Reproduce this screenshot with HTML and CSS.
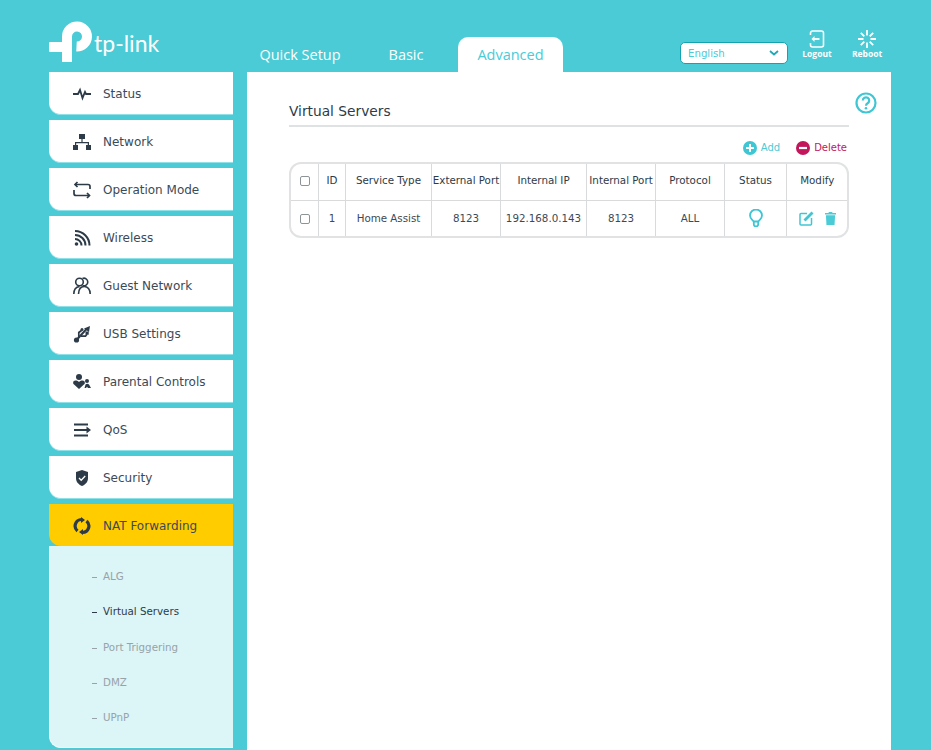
FILE: index.html
```html
<!DOCTYPE html>
<html lang="en">
<head>
<meta charset="utf-8">
<title>TP-Link Virtual Servers</title>
<link rel="stylesheet" href="styles.css">
</head>
<body>
<header class="topbar">
  <div class="logo">
    <svg class="logo-mark" width="44" height="44" viewBox="0 0 44 44"><path d="M18 41V15.500A10 10 0 1 1 27.500 25.500" fill="none" stroke="#fff" stroke-width="10"/><rect x="0" y="21" width="14" height="10" rx="1" fill="#fff"/></svg>
    <span class="logo-text">tp-link</span>
  </div>
  <nav class="tabs">
    <a class="tab tab-quick">Quick Setup</a>
    <a class="tab tab-basic">Basic</a>
    <a class="tab tab-active">Advanced</a>
  </nav>
  <div class="top-tools">
    <div class="lang"><span>English</span>
      <svg width="10" height="6" viewBox="0 0 10 6"><path d="M1 1l4 3.500L9 1" fill="none" stroke="#1fa8b5" stroke-width="1.800"/></svg>
    </div>
    <a class="tool">
      <svg width="18" height="18" viewBox="0 0 18 18" fill="none" stroke="#fff" stroke-width="1.600"><path d="M2.500 5V3a2 2 0 0 1 2-2h9a2 2 0 0 1 2 2v12a2 2 0 0 1-2 2h-9a2 2 0 0 1-2-2v-2"/><path d="M6.500 6L3.500 9l3 3z" fill="#fff" stroke="none"/><path d="M6 9h5.500" stroke-width="1.800"/></svg>
      <span>Logout</span>
    </a>
    <a class="tool">
      <svg width="18" height="18" viewBox="0 0 18 18" fill="none" stroke="#fff" stroke-width="1.800"><path d="M9 0v5.500M9 12.500V18M0 9h5.500M12.500 9H18M2.800 2.800l3.500 3.500M11.700 11.700l3.500 3.500M15.200 2.800l-3.500 3.500M6.300 11.700l-3.500 3.500"/></svg>
      <span>Reboot</span>
    </a>
  </div>
</header>
<div class="layout">
  <aside class="sidebar">
    <a class="nav-item"><svg class="nav-icon" viewBox="0 0 18 18" fill="none" stroke="#2d3b48" stroke-width="1.800"><path d="M0 9h5l2-4 2.500 8L12 7l1 2h5"/></svg><span>Status</span></a>
    <a class="nav-item"><svg class="nav-icon" viewBox="0 0 18 18" fill="#2d3b48"><rect x="6" y="1" width="6" height="5"/><rect x="0" y="12" width="5" height="5"/><rect x="13" y="12" width="5" height="5"/><path d="M8.400 6h1.200v3H16v3h-1.200v-1.800H3.200V12H2V9h6.400z"/></svg><span>Network</span></a>
    <a class="nav-item"><svg class="nav-icon" viewBox="0 0 18 18" fill="none" stroke="#2d3b48" stroke-width="1.700"><path d="M4.500 1L2 3.500 4.500 6"/><path d="M2.500 3.500h12.500a2 2 0 0 1 2 2V8"/><path d="M14 17l2.500-2.500L14 12"/><path d="M16 14.500H3a2 2 0 0 1-2-2V9"/></svg><span>Operation Mode</span></a>
    <a class="nav-item"><svg class="nav-icon" viewBox="0 0 18 18" fill="none" stroke="#2d3b48" stroke-width="2"><path d="M2 2a14.500 14.500 0 0 1 14.500 14.500M2 6a10.500 10.500 0 0 1 10.500 10.500M2 10a6.500 6.500 0 0 1 6.500 6.500"/><circle cx="3.500" cy="15" r="1.800" fill="#2d3b48" stroke="none"/></svg><span>Wireless</span></a>
    <a class="nav-item"><svg class="nav-icon" viewBox="0 0 18 18" fill="none" stroke="#2d3b48" stroke-width="1.600"><circle cx="6.500" cy="5" r="3.800"/><path d="M9.500 1.500a3.800 3.800 0 1 1 0 7"/><path d="M0.800 17c0-4 2.300-7 5.700-7.500M17.200 17c0-4.500-2.500-7.500-6-7.500-3 0-5.500 2.500-5.700 7.500"/></svg><span>Guest Network</span></a>
    <a class="nav-item"><svg class="nav-icon" viewBox="0 0 18 18"><g fill="none" stroke="#2d3b48"><path d="M3.500 15L13.500 4" stroke-width="2"/><path d="M5.800 12.500V7.500L8.500 5.500" stroke-width="1.700"/><path d="M8 11.200h4.500l1.500-2" stroke-width="1.700"/></g><g fill="#2d3b48"><circle cx="3.500" cy="15" r="2.600"/><path d="M11 3.500L17 1l-1 6z"/><circle cx="9" cy="4.500" r="1.500"/><rect x="12.500" y="6.500" width="3.200" height="3.200"/></g></svg><span>USB Settings</span></a>
    <a class="nav-item"><svg class="nav-icon" viewBox="0 0 18 18" fill="#2d3b48"><circle cx="6" cy="4" r="3"/><path d="M6 16L.5 11C-1 8 2.500 6 6 9c3.500-3 7-1 5.500 2z"/><circle cx="14" cy="8" r="2"/><path d="M11.500 15l1-3.500c1-1 2.500-1 3.500 0l2 3.500h-3l-1-1.200-1 1.200z"/></svg><span>Parental Controls</span></a>
    <a class="nav-item"><svg class="nav-icon" viewBox="0 0 18 18" fill="#2d3b48"><rect x="1" y="2.500" width="14" height="2"/><rect x="1" y="8" width="14" height="2"/><rect x="1" y="13.500" width="14" height="2"/><path d="M13.500 5.500l4.500 3.500-4.500 3.500z"/></svg><span>QoS</span></a>
    <a class="nav-item"><svg class="nav-icon" viewBox="0 0 18 18"><path d="M9 1l6 2v6c0 4-2.500 6.500-6 8-3.500-1.500-6-4-6-8V3z" fill="#2d3b48"/><path d="M6 9l2.200 2.200L12.200 7" fill="none" stroke="#fff" stroke-width="1.300"/></svg><span>Security</span></a>
    <div class="nav-group">
      <a class="nav-item nav-item-active"><svg class="nav-icon" viewBox="0 0 18 18" fill="none" stroke="#2d3b48" stroke-width="3.200"><path d="M4.500 14A6.500 6.500 0 0 1 8.500 2.500"/><path d="M13.500 4A6.500 6.500 0 0 1 9.500 15.500"/><path d="M8 0v6l4-3zM10 18v-6l-4 3z" fill="#2d3b48" stroke="none"/></svg><span>NAT Forwarding</span></a>
      <ul class="subnav">
        <li class="sub-item">ALG</li>
        <li class="sub-item sub-item-active">Virtual Servers</li>
        <li class="sub-item">Port Triggering</li>
        <li class="sub-item">DMZ</li>
        <li class="sub-item">UPnP</li>
      </ul>
    </div>
  </aside>
  <main class="panel">
    <div class="panel-head">
      <h1 class="title">Virtual Servers</h1>
      <svg class="help" width="22" height="22" viewBox="0 0 22 22" fill="none" stroke="#3fc6d4" stroke-width="2.200"><circle cx="11" cy="11" r="9.500"/><path d="M7.800 8.500a3.200 3.200 0 1 1 4.800 2.800c-1 .6-1.600 1.200-1.600 2.400"/><circle cx="11" cy="16.300" r="1.300" fill="#3fc6d4" stroke="none"/></svg>
    </div>
    <div class="actions">
      <a class="action action-add"><svg width="14" height="14" viewBox="0 0 14 14"><circle cx="7" cy="7" r="7" fill="#3fc6d4"/><path d="M7 3v8M3 7h8" stroke="#fff" stroke-width="2"/></svg>Add</a>
      <a class="action action-del"><svg width="14" height="14" viewBox="0 0 14 14"><circle cx="7" cy="7" r="7" fill="#c2185b"/><path d="M3 7h8" stroke="#fff" stroke-width="2.200"/></svg>Delete</a>
    </div>
    <div class="table-wrap">
      <table class="grid">
        <colgroup>
          <col class="c-check"><col class="c-id"><col class="c-type"><col class="c-port"><col class="c-ip"><col class="c-port2"><col class="c-proto"><col class="c-status"><col>
        </colgroup>
        <thead>
          <tr>
            <th><span class="check"></span></th><th>ID</th><th>Service Type</th><th>External Port</th><th>Internal IP</th><th>Internal Port</th><th>Protocol</th><th>Status</th><th>Modify</th>
          </tr>
        </thead>
        <tbody>
          <tr>
            <td><span class="check"></span></td><td>1</td><td>Home Assist</td><td>8123</td><td>192.168.0.143</td><td>8123</td><td>ALL</td>
            <td><svg class="cell-icon" width="14" height="18" viewBox="0 0 14 18" fill="none" stroke="#3fc6d4" stroke-width="1.800"><path d="M4.700 12.500C3 10.500 1 9.500 1 6.500a6 6 0 0 1 12 0c0 3-2 4-3.700 6z"/><path d="M4.800 12.500v2.700a1.800 1.800 0 0 0 4.400 0v-2.700"/></svg></td>
            <td><span class="modify">
              <svg width="15" height="15" viewBox="0 0 15 15" fill="none" stroke="#3fc6d4" stroke-width="1.500"><path d="M8 2.500H2a1 1 0 0 0-1 1v9.500a1 1 0 0 0 1 1h9.500a1 1 0 0 0 1-1V7"/><path d="M5.500 9.500L13.500 1.500" stroke-width="2.800"/></svg>
              <svg width="11" height="13" viewBox="0 0 12 14" fill="#4acbd6"><path d="M4 0h4v1h4v1.500H0V1h4z"/><path d="M1 3.500h10l-.6 10.500H1.600z"/></svg>
            </span></td>
          </tr>
        </tbody>
      </table>
    </div>
  </main>
</div>
</body>
</html>
```
FILE: styles.css
```css
* { box-sizing: border-box; }
html, body { margin: 0; height: 750px; overflow: hidden; }
body { background: #4acbd6; font-family: "DejaVu Sans", sans-serif; color: #2d3b48; }

.topbar { height: 72px; padding-left: 49px; display: flex; align-items: flex-end; position: relative; }
.logo { width: 210px; height: 51px; flex: none; display: flex; color: #fff; }
.logo-mark { flex: none; margin-right: 1px; }
.logo-text { font-family: "Lato", sans-serif; font-size: 23px; font-weight: 400; margin-top: 8px; }

.tabs { display: flex; align-items: flex-end; height: 35px; }
.tab { height: 35px; line-height: 35px; font-family: "Open Sans", sans-serif; font-size: 14.500px; color: #fff; text-align: center; white-space: nowrap; }
.tab-quick { width: 82px; }
.tab-basic { width: 36px; margin-left: 47px; }
.tab-active { width: 105px; margin-left: 34px; background: #fff; color: #4acbd6; border-radius: 10px 10px 0 0; }

.top-tools { position: absolute; right: 0; top: 0; display: flex; align-items: flex-start; }
.lang { width: 108px; height: 22px; margin-top: 42px; background: #fff; border: 1px solid #14a3b0; border-radius: 5px; display: flex; align-items: center; justify-content: space-between; padding: 0 8px 0 7px; font-size: 10.200px; color: #4acbd6; }
.tool { width: 50px; margin-top: 30px; display: flex; flex-direction: column; align-items: center; color: #fff; font-size: 8.500px; font-weight: 700; font-family: "Open Sans", sans-serif; line-height: 12px; }
.tool:first-of-type { margin-left: 4px; }
.top-tools .tool:last-child { margin-right: 39px; }

.layout { display: flex; gap: 14px; height: 678px; padding-left: 49px; }
.sidebar { width: 184px; flex: none; display: flex; flex-direction: column; gap: 5px; }
.nav-item { height: 43px; display: flex; align-items: center; background: #fff; border-bottom-left-radius: 12px; border-bottom: 1px solid #8fe0e7; font-size: 12px; color: #2d3b48; padding: 2px 0 0 24px; }
.nav-icon { width: 18px; height: 18px; flex: none; margin-right: 12px; }
.nav-item span { color: #3c4a56; }
.nav-item-active { background: #ffcc00; border-bottom: none; height: 42px; }
.nav-group { display: flex; flex-direction: column; }
.subnav { list-style: none; margin: 0; padding: 13px 0 12px; height: 202px; background: #dcf5f7; border-left: 1px solid #f2fbfc; border-bottom: 1px solid #f2fbfc; border-bottom-left-radius: 12px; }
.sub-item { height: 35.300px; line-height: 35.300px; font-size: 10.300px; color: #97a3a8; padding-left: 53px; position: relative; }
.sub-item::before { content: ""; position: absolute; left: 42px; top: 18px; width: 5px; height: 1px; background: currentColor; }
.sub-item-active { color: #2d3b48; }

.panel { width: 644px; height: 678px; background: #fff; padding: 0 42px; position: relative; }
.panel-head { height: 55px; padding-top: 30px; border-bottom: 2px solid #dfe2e3; width: 560px; }
.title { margin: 0; font-size: 13.750px; font-weight: 400; line-height: 18px; color: #2d3b48; }
.help { position: absolute; left: 608px; top: 20px; }
.actions { width: 560px; height: 36px; display: flex; justify-content: flex-end; align-items: center; gap: 16px; padding-top: 5px; padding-right: 2px; font-size: 10px; }
.action { display: flex; align-items: center; gap: 4px; }
.action-add { color: #4acbd6; }
.action-del { color: #c2185b; }

.table-wrap { width: 560px; height: 76px; margin-top: -1px; border: 2px solid #e0e2e3; border-radius: 12px; overflow: hidden; }
.grid { width: 100%; height: 100%; border-collapse: collapse; table-layout: fixed; font-size: 10.300px; color: #3c4a56; }
.grid th, .grid td { border: 1px solid #d8dadb; padding: 0 0 0 1px; text-align: center; vertical-align: middle; font-weight: 400; white-space: nowrap; }
.grid th { color: #2d3b48; height: 36px; padding-bottom: 3px; }
.grid tr:first-child th { border-top: none; }
.grid tr:last-child td { border-bottom: none; }
.grid th:first-child, .grid td:first-child { border-left: none; }
.grid th:last-child, .grid td:last-child { border-right: none; }
.c-check { width: 27px; }
.c-id { width: 27px; }
.c-type { width: 86px; }
.c-port { width: 69px; }
.c-ip { width: 86px; }
.c-port2 { width: 69px; }
.c-proto { width: 69px; }
.c-status { width: 62px; }
.check { display: inline-block; width: 10px; height: 10px; border: 1px solid #8d9498; border-radius: 2px; vertical-align: middle; }
.cell-icon { vertical-align: middle; }
.modify { display: inline-flex; align-items: center; gap: 11px; vertical-align: middle; }
```
